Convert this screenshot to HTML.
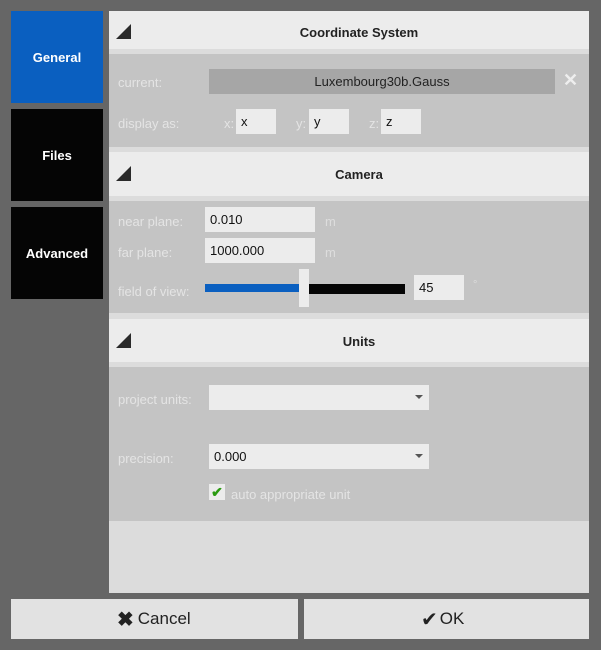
<!DOCTYPE html>
<html><head><style>
*{margin:0;padding:0;box-sizing:border-box}
body{width:601px;height:650px;background:#666;position:relative;overflow:hidden;font-family:"Liberation Sans",sans-serif;font-size:13px}
.a{position:absolute}
.tab{position:absolute;left:11px;width:92px;height:92px;color:#fff;font-weight:bold;font-size:13px;display:flex;align-items:center;justify-content:center;background:#050505}
.hdr{position:absolute;left:109px;width:480px;height:42px;background:#ececec;border-bottom:5px solid #dcdcdc;font-weight:bold;font-size:13px;color:#222;text-align:center;line-height:40px;padding-left:20px}
.tri{position:absolute;left:116px;width:0;height:0;border-left:15px solid transparent;border-bottom:15px solid #2a2a2a}
.body{position:absolute;left:109px;width:480px;background:#c4c4c4}
.lbl{position:absolute;color:#e4e4e4;font-size:13px}
.fld{position:absolute;background:#ececec;color:#111;font-size:13px;padding-left:5px;line-height:26px}
.dd:after{content:"";position:absolute;right:6px;top:10px;border-left:4px solid transparent;border-right:4px solid transparent;border-top:4px solid #555}
.btn{position:absolute;top:599px;height:40px;background:#e2e2e2;font-size:17px;color:#222;display:flex;align-items:center}
</style></head><body>
<div class="tab" style="top:11px;background:#0a5fc0">General</div>
<div class="tab" style="top:109px">Files</div>
<div class="tab" style="top:207px">Advanced</div>

<div class="body" style="top:11px;height:582px;background:#dcdcdc"></div>

<div class="hdr" style="top:11px;height:43px;line-height:44px">Coordinate System</div>
<div class="tri" style="top:24px"></div>
<div class="body" style="top:54px;height:93px"></div>
<div class="lbl" style="left:118px;top:75px">current:</div>
<div class="a" style="left:209px;top:69px;width:346px;height:25px;background:#a6a6a6;color:#222;text-align:center;line-height:26px">Luxembourg30b.Gauss</div>
<div class="a" style="left:563px;top:70px;color:#eee;font-size:18px;font-weight:bold">✕</div>
<div class="lbl" style="left:118px;top:116px">display as:</div>
<div class="lbl" style="left:224px;top:116px">x:</div>
<div class="fld" style="left:236px;top:109px;width:40px;height:25px">x</div>
<div class="lbl" style="left:296px;top:116px">y:</div>
<div class="fld" style="left:309px;top:109px;width:40px;height:25px">y</div>
<div class="lbl" style="left:369px;top:116px">z:</div>
<div class="fld" style="left:381px;top:109px;width:40px;height:25px">z</div>

<div class="hdr" style="top:152px;height:49px;line-height:45px">Camera</div>
<div class="tri" style="top:166px"></div>
<div class="body" style="top:201px;height:112px"></div>
<div class="lbl" style="left:118px;top:214px">near plane:</div>
<div class="fld" style="left:205px;top:207px;width:110px;height:25px">0.010</div>
<div class="lbl" style="left:325px;top:214px;color:#ddd">m</div>
<div class="lbl" style="left:118px;top:245px">far plane:</div>
<div class="fld" style="left:205px;top:238px;width:110px;height:25px">1000.000</div>
<div class="lbl" style="left:325px;top:245px;color:#ddd">m</div>
<div class="lbl" style="left:118px;top:284px">field of view:</div>
<div class="a" style="left:205px;top:284px;width:95px;height:8px;background:#0a5fc0"></div>
<div class="a" style="left:309px;top:284px;width:96px;height:10px;background:#050505"></div>
<div class="a" style="left:299px;top:269px;width:10px;height:38px;background:#ececec"></div>
<div class="fld" style="left:414px;top:275px;width:50px;height:25px">45</div>
<div class="lbl" style="left:473px;top:279px;color:#ddd;font-size:11px">°</div>

<div class="hdr" style="top:319px;height:48px;line-height:45px">Units</div>
<div class="tri" style="top:333px"></div>
<div class="body" style="top:367px;height:154px"></div>
<div class="lbl" style="left:118px;top:392px">project units:</div>
<div class="fld dd" style="left:209px;top:385px;width:220px;height:25px"></div>
<div class="lbl" style="left:118px;top:451px">precision:</div>
<div class="fld dd" style="left:209px;top:444px;width:220px;height:25px">0.000</div>
<div class="a" style="left:209px;top:484px;width:16px;height:16px;background:#ececec;color:#2a9a10;font-size:14px;line-height:16px;text-align:center;font-weight:bold">✔</div>
<div class="lbl" style="left:231px;top:487px">auto appropriate unit</div>

<div class="btn" style="left:11px;width:287px;padding-left:106px"><span style="font-size:20px;font-weight:bold;margin-right:4px">✖</span>Cancel</div>
<div class="btn" style="left:304px;width:285px;padding-left:117px"><span style="font-size:20px;margin-right:2px">✔</span>OK</div>
</body></html>
